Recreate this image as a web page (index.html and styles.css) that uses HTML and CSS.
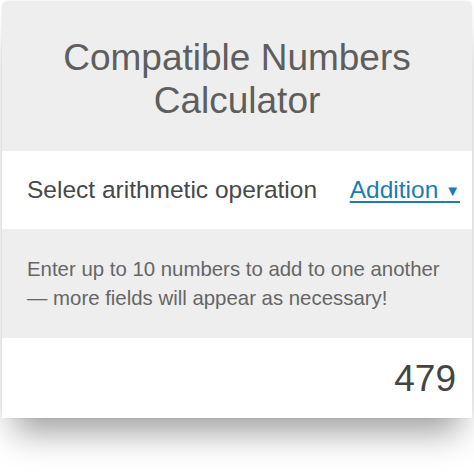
FILE: index.html
```html
<!DOCTYPE html>
<html>
<head>
<meta charset="utf-8">
<link rel="stylesheet" href="styles.css">
</head>
<body>
<div class="card">
  <div class="header">
    <h1 class="title">Compatible Numbers<br>Calculator</h1>
  </div>
  <div class="row select-row">
    <span class="label">Select arithmetic operation</span>
    <a class="op-link" href="#">Addition <span class="caret">&#9660;</span></a>
  </div>
  <div class="info">
    Enter up to 10 numbers to add to one another — more fields will appear as necessary!
  </div>
  <div class="row value-row">
    <span class="value">479</span>
  </div>
</div>
</body>
</html>
```

FILE: styles.css
```css
html, body {
  margin: 0;
  padding: 0;
  background: #ffffff;
}

body {
  font-family: "Liberation Sans", Arial, Helvetica, sans-serif;
  padding: 1px 2px 60px 2px;
}

.card {
  width: 470px;
  border-radius: 6px;
  background: #ffffff;
  box-shadow: 0 0 2px rgba(0, 0, 0, 0.12), 0 26px 32px -12px rgba(0, 0, 0, 0.38);
}

.header {
  background: #eeeeee;
  border-radius: 6px 6px 0 0;
  padding: 35px 10px 29px;
  text-align: center;
}

.title {
  margin: 0;
  font-weight: normal;
  font-size: 37px;
  line-height: 43px;
  color: #5e5e5e;
}

.row {
  background: #ffffff;
  display: flex;
  align-items: center;
}

.select-row {
  height: 78px;
  padding: 0 12px 0 25px;
  justify-content: space-between;
  font-size: 24.5px;
}

.label {
  color: #484848;
}

.op-link {
  color: #1b7db3;
  text-decoration: underline;
  text-underline-offset: 3px;
  text-decoration-thickness: 1.5px;
}

.caret {
  font-size: 15px;
  vertical-align: 2px;
}

.info {
  background: #eeeeee;
  padding: 26px 20px 22px 25px;
  height: 61px;
  font-size: 20.4px;
  line-height: 29px;
  color: #666666;
}

.value-row {
  height: 80px;
  justify-content: flex-end;
  padding: 0 16px 0 16px;
}

.value {
  font-size: 37px;
  color: #444444;
  padding-top: 2px;
}
```
